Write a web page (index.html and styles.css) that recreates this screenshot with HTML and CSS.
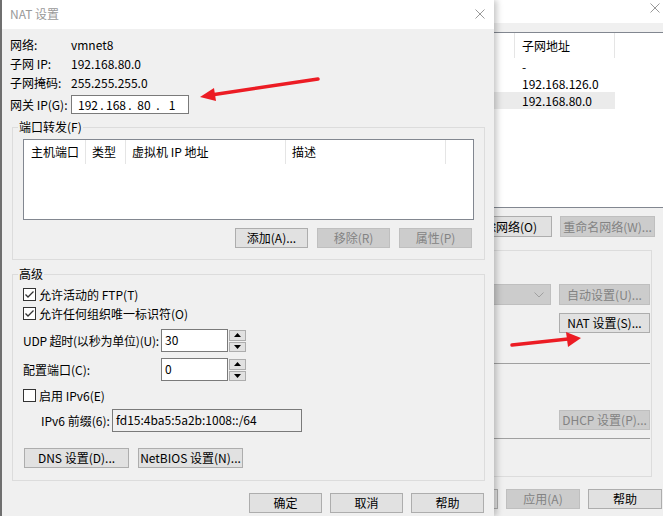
FILE: index.html
```html
<!DOCTYPE html>
<html lang="zh-CN">
<head>
    <meta charset="UTF-8">
    <meta name="viewport" content="width=device-width, initial-scale=1.0">
    <title>NAT 设置</title>
    <link rel="stylesheet" href="styles.css">
</head>
<body>
    <div class="desktop">
        <!-- 虚拟网络编辑器 (behind) -->
        <div class="window main-win">
            <div class="titlebar">
                <svg class="close" width="10" height="10" viewBox="0 0 10 10"><path d="M0.5 0.5L9.5 9.5M9.5 0.5L0.5 9.5" /></svg>
            </div>
            <div class="main-body">
                <div class="listview net-list">
                    <div class="lv-head">
                        <span class="col nc1"></span>
                        <span class="col nc2">子网地址</span>
                    </div>
                    <div class="lv-row"><span class="col nc1"></span><span class="col nc2">-</span></div>
                    <div class="lv-row"><span class="col nc1"></span><span class="col nc2">192.168.126.0</span></div>
                    <div class="lv-row sel"><span class="col nc1"></span><span class="col nc2">192.168.80.0</span></div>
                </div>
                <div class="btn-row main-btns">
                    <button class="btn wide">移除网络(O)</button>
                    <button class="btn wide" disabled>重命名网络(W)...</button>
                </div>
                <div class="main-group">
                    <div class="opt-row first">
                        <div class="combo">
                            <svg width="10" height="6" viewBox="0 0 10 6"><path d="M0.5 0.5L5 5L9.5 0.5" /></svg>
                        </div>
                        <button class="btn mid" disabled>自动设置(U)...</button>
                    </div>
                    <div class="opt-row nat">
                        <button class="btn mid">NAT 设置(S)...</button>
                    </div>
                    <div class="sep sep-a"></div>
                    <div class="opt-row dhcp">
                        <button class="btn mid" disabled>DHCP 设置(P)...</button>
                    </div>
                    <div class="sep sep-b"></div>
                </div>
                <div class="btn-row main-footer">
                    <button class="btn foot"></button>
                    <button class="btn foot" disabled>应用(A)</button>
                    <button class="btn foot">帮助</button>
                </div>
            </div>
        </div>

        <!-- NAT 设置 dialog -->
        <div class="window dialog">
            <div class="titlebar">
                <span class="title">NAT 设置</span>
                <svg class="close" width="10" height="10" viewBox="0 0 10 10"><path d="M0.5 0.5L9.5 9.5M9.5 0.5L0.5 9.5" /></svg>
            </div>
            <div class="dlg-body">
                <div class="info">
                    <span>网络:</span><span>vmnet8</span>
                    <span>子网 IP:</span><span>192.168.80.0</span>
                    <span>子网掩码:</span><span>255.255.255.0</span>
                </div>
                <div class="gateway">
                    <span class="gw-label">网关 IP(G):</span>
                    <div class="ip-box">
                        <span class="oct">192</span><span class="dot">.</span>
                        <span class="oct">168</span><span class="dot">.</span>
                        <span class="oct">80</span><span class="dot">.</span>
                        <span class="oct">1</span>
                    </div>
                </div>

                <fieldset class="group forward">
                    <legend>端口转发(F)</legend>
                    <div class="listview fwd-list">
                        <div class="lv-head">
                            <span class="col fc1">主机端口</span>
                            <span class="col fc2">类型</span>
                            <span class="col fc3">虚拟机 IP 地址</span>
                            <span class="col fc3">描述</span>
                        </div>
                    </div>
                    <div class="btn-row fwd-btns">
                        <button class="btn">添加(A)...</button>
                        <button class="btn" disabled>移除(R)</button>
                        <button class="btn" disabled>属性(P)</button>
                    </div>
                </fieldset>

                <fieldset class="group advanced">
                    <legend>高级</legend>
                    <div class="check-row">
                        <span class="checkbox"><svg width="11" height="11" viewBox="0 0 11 11"><path d="M1.5 5.5L4 8L9.5 2.5" /></svg></span>
                        <span>允许活动的 FTP(T)</span>
                    </div>
                    <div class="check-row">
                        <span class="checkbox"><svg width="11" height="11" viewBox="0 0 11 11"><path d="M1.5 5.5L4 8L9.5 2.5" /></svg></span>
                        <span>允许任何组织唯一标识符(O)</span>
                    </div>
                    <div class="field-row">
                        <span class="field-label udp">UDP 超时(以秒为单位)(U):</span>
                        <div class="text-box num">30</div>
                        <div class="spin">
                            <span class="spin-btn"><svg width="7" height="4" viewBox="0 0 7 4"><path d="M3.5 0L7 4H0Z" /></svg></span>
                            <span class="spin-btn"><svg width="7" height="4" viewBox="0 0 7 4"><path d="M0 0H7L3.5 4Z" /></svg></span>
                        </div>
                    </div>
                    <div class="field-row">
                        <span class="field-label">配置端口(C):</span>
                        <div class="text-box num">0</div>
                        <div class="spin">
                            <span class="spin-btn"><svg width="7" height="4" viewBox="0 0 7 4"><path d="M3.5 0L7 4H0Z" /></svg></span>
                            <span class="spin-btn"><svg width="7" height="4" viewBox="0 0 7 4"><path d="M0 0H7L3.5 4Z" /></svg></span>
                        </div>
                    </div>
                    <div class="check-row ipv6">
                        <span class="checkbox empty"></span>
                        <span>启用 IPv6(E)</span>
                    </div>
                    <div class="field-row prefix">
                        <span class="field-label">IPv6 前缀(6):</span>
                        <div class="text-box readonly">fd15:4ba5:5a2b:1008::/64</div>
                    </div>
                    <div class="btn-row adv-btns">
                        <button class="btn long">DNS 设置(D)...</button>
                        <button class="btn long">NetBIOS 设置(N)...</button>
                    </div>
                </fieldset>

                <div class="btn-row dlg-footer">
                    <button class="btn">确定</button>
                    <button class="btn">取消</button>
                    <button class="btn">帮助</button>
                </div>
            </div>
        </div>

        <!-- annotation arrows -->
        <svg class="marks" width="663" height="516" viewBox="0 0 663 516">
            <path class="arrow-line" d="M318 79L211 95" />
            <path class="arrow-head" d="M200 97L214 88L216 101Z" />
            <path class="arrow-line" d="M512 345L568 339" />
            <path class="arrow-head" d="M581 338L566 332L568 347Z" />
        </svg>
    </div>
</body>
</html>
```

FILE: styles.css
```css
* {
    box-sizing: border-box;
}

body {
    margin: 0;
    font-family: "Noto Sans CJK SC", "Noto Sans", sans-serif;
    font-size: 12px;
    color: #000;
    background-color: #f0f0f0;
    overflow: hidden;
}

.desktop {
    position: relative;
    width: 663px;
    height: 516px;
    overflow: hidden;
}

.window {
    position: absolute;
    top: 0;
    height: 516px;
    background-color: #f0f0f0;
}

.titlebar {
    background-color: #fff;
    display: flex;
    align-items: center;
}

.close path {
    stroke: #999;
    stroke-width: 1;
    fill: none;
}

/* buttons */
.btn {
    width: 73px;
    height: 20px;
    padding: 0;
    border: 1px solid #adadad;
    background-color: #e1e1e1;
    font-family: inherit;
    font-size: 12px;
    line-height: 18px;
    color: #000;
    text-align: center;
    white-space: nowrap;
}

.btn:disabled {
    background-color: #cccccc;
    border-color: #bfbfbf;
    color: #838383;
}

.btn-row {
    display: flex;
    justify-content: flex-end;
}

/* list views */
.listview {
    background-color: #fff;
    border: 1px solid #828790;
}

.lv-head {
    display: flex;
}

.lv-head .col {
    border-right: 1px solid #e5e5e5;
}

.col {
    display: block;
    padding-left: 6px;
    white-space: nowrap;
    overflow: hidden;
}

.lv-row {
    display: flex;
    height: 17px;
    line-height: 17px;
}

.lv-row.sel .col {
    background-color: #ebebeb;
}

/* main window (behind) */
.main-win {
    left: 300px;
    width: 363px;
    overflow: hidden;
}

.main-win .titlebar {
    height: 23px;
    justify-content: flex-end;
    align-items: flex-start;
    padding: 3px 3px 0 0;
}

.net-list {
    margin-top: 9px;
    width: 380px;
    height: 176px;
}

.net-list .lv-head {
    height: 25px;
    line-height: 25px;
}

.nc1 {
    width: 214px;
}

.nc2 {
    width: 100px;
    padding-left: 7px;
}

.main-btns {
    margin-top: 8px;
    padding-right: 8px;
    gap: 8px;
}

.btn.wide {
    width: 95px;
    height: 21px;
}

.main-group {
    margin-top: 13px;
    margin-right: 11px;
    height: 227px;
    border: 1px solid #dcdcdc;
    border-left: none;
    padding: 33px 1px 0 0;
}

.opt-row {
    display: flex;
    justify-content: flex-end;
    gap: 8px;
}

.opt-row.nat {
    margin-top: 8px;
}

.opt-row.dhcp {
    margin-top: 46px;
}

.btn.mid {
    width: 91px;
}

.opt-row.first .btn.mid {
    height: 21px;
}

.combo {
    width: 150px;
    height: 21px;
    background-color: #cccccc;
    border: 1px solid #bfbfbf;
    display: flex;
    align-items: center;
    justify-content: flex-end;
    padding-right: 6px;
}

.combo path {
    stroke: #a0a0a0;
    fill: none;
}

.sep {
    height: 1px;
    background-color: #a0a0a0;
}

.sep-a {
    margin-top: 30px;
}

.sep-b {
    margin-top: 8px;
}

.main-footer {
    margin-top: 12px;
    padding-right: 1px;
    gap: 8px;
}

.btn.foot {
    width: 74px;
}

/* NAT dialog */
.dialog {
    left: 0;
    width: 494px;
    border-left: 2px solid #6f6f6f;
    box-shadow: 3px 0 6px rgba(0, 0, 0, 0.22);
}

.dialog .titlebar {
    height: 29px;
    justify-content: space-between;
    padding: 0 9px 2px 8px;
}

.title {
    color: #999;
    line-height: 26px;
}

.dlg-body {
    padding: 6px 10px 0 8px;
}

.info {
    display: grid;
    grid-template-columns: 61px auto;
    grid-auto-rows: 19px;
    line-height: 19px;
}

.gateway {
    display: flex;
    align-items: center;
    margin-top: 3px;
}

.gw-label {
    width: 61px;
}

.ip-box {
    width: 118px;
    height: 19px;
    background-color: #fff;
    border: 1px solid #7a7a7a;
    display: flex;
    padding-left: 4px;
    line-height: 17px;
}

.oct {
    width: 24px;
    text-align: center;
}

.dot {
    width: 4px;
    text-align: center;
}

.group {
    margin: 0 0 0 2px;
    width: 473px;
    min-width: 0;
    border: 1px solid #dcdcdc;
}

.group legend {
    padding: 0 1px;
    margin-left: -5px;
    line-height: 16px;
}

.forward {
    margin-top: 5px;
    padding: 4px 10px 11px;
}

.fwd-list {
    width: 451px;
    height: 81px;
}

.fwd-list .lv-head {
    height: 24px;
    line-height: 24px;
    padding-left: 1px;
}

.fc1 {
    width: 61px;
}

.fc2 {
    width: 40px;
}

.fc3 {
    width: 160px;
}

.fwd-btns {
    margin-top: 8px;
    margin-right: 2px;
    gap: 9px;
}

.advanced {
    margin-top: 6px;
    padding: 3px 10px 12px;
}

.check-row {
    display: flex;
    align-items: center;
    height: 19px;
}

.checkbox {
    width: 13px;
    height: 13px;
    margin-right: 3px;
    border: 1px solid #333;
    background-color: #fff;
    display: flex;
    align-items: center;
    justify-content: center;
}

.checkbox path {
    stroke: #333;
    stroke-width: 1.3;
    fill: none;
}

.field-row {
    display: flex;
    align-items: center;
    height: 23px;
    margin-top: 6px;
}

.field-label {
    width: 138px;
    white-space: nowrap;
}

.field-label.udp {
    letter-spacing: -0.2px;
}

.text-box {
    height: 23px;
    border: 1px solid #7a7a7a;
    background-color: #fff;
    padding-left: 3px;
    line-height: 20px;
}

.text-box.num {
    width: 67px;
}

.spin {
    display: flex;
    flex-direction: column;
    gap: 1px;
    margin-left: 1px;
    height: 23px;
    padding-top: 1px;
}

.spin-btn {
    width: 17px;
    height: 11px;
    border: 1px solid #adadad;
    background-color: #e1e1e1;
    display: flex;
    align-items: center;
    justify-content: center;
}

.spin-btn path {
    fill: #000;
}

.check-row.ipv6 {
    margin-top: 5px;
}

.field-row.prefix {
    margin-top: 4px;
    padding-left: 18px;
}

.prefix .field-label {
    width: 71px;
}

.text-box.readonly {
    width: 190px;
    background-color: #f0f0f0;
}

.adv-btns {
    justify-content: flex-start;
    margin-top: 16px;
    margin-left: 1px;
    gap: 9px;
}

.btn.long {
    width: 105px;
}

.dlg-footer {
    margin-top: 12px;
    gap: 8px;
}

/* arrows */
.marks {
    position: absolute;
    left: 0;
    top: 0;
    pointer-events: none;
}

.arrow-line {
    stroke: #ec1c24;
    stroke-width: 3.5;
    stroke-linecap: round;
    fill: none;
}

.arrow-head {
    fill: #ec1c24;
}
```
